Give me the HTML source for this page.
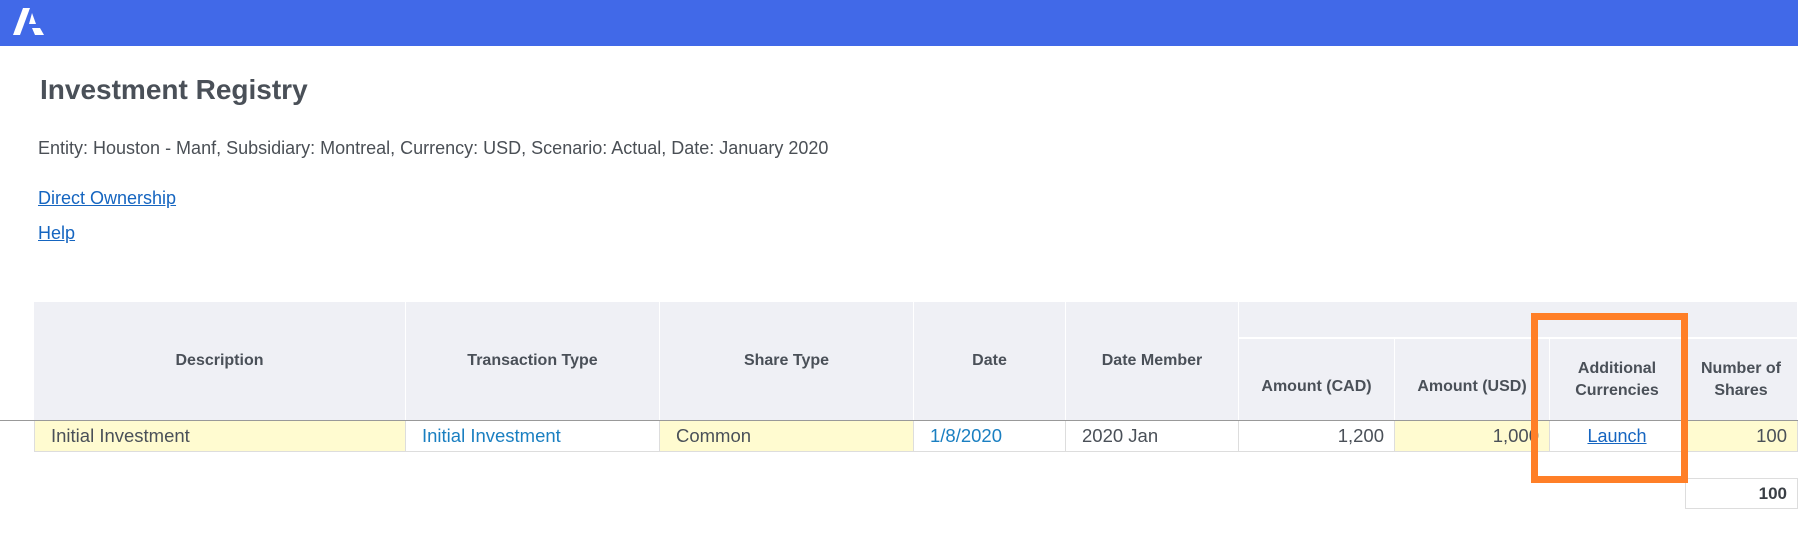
<!DOCTYPE html>
<html><head><meta charset="utf-8"><style>
*{margin:0;padding:0;box-sizing:border-box}
body{width:1798px;height:554px;background:#fff;font-family:"Liberation Sans",sans-serif;position:relative;overflow:hidden;color:#4a5058}
.a{position:absolute}
.hdr{left:0;top:0;width:1798px;height:46px;background:#4169e8}
.title{left:40px;top:74px;font-size:28px;font-weight:bold;color:#4a5058}
.sub{left:38px;top:138px;font-size:18px;color:#4a4f55}
.lnk{font-size:18px;color:#1565c0;text-decoration:underline}
.hc{background:#eff0f5;border-right:1px solid #fff;display:flex;align-items:center;justify-content:center;text-align:center;font-weight:bold;font-size:16px;color:#4a5058;line-height:22px}
.c{top:421px;height:31px;border-right:1px solid #ddd;border-bottom:1px solid #ddd;font-size:18.5px;display:flex;align-items:center;padding:0 16px;color:#4a5058}
.y{background:#fffbd0}
.bl{color:#1a7fc1}
.r{justify-content:flex-end;padding-right:10px}
</style></head><body>
<div class="a hdr"></div>
<svg class="a" style="left:0;top:0" width="60" height="46"><polygon points="13,35 20,35 30,8 23,8" fill="#fff"/><polygon points="32,13 36,24 29,24" fill="#fff"/><polygon points="32,28 40,28 44,35 35,35" fill="#fff"/></svg>
<div class="a title">Investment Registry</div>
<div class="a sub">Entity: Houston - Manf, Subsidiary: Montreal, Currency: USD, Scenario: Actual, Date: January 2020</div>
<a class="a lnk" style="left:38px;top:188px">Direct Ownership</a>
<a class="a lnk" style="left:38px;top:223px">Help</a>

<div class="a hc" style="left:34px;top:302px;width:372px;height:118px">Description</div>
<div class="a hc" style="left:406px;top:302px;width:254px;height:118px">Transaction Type</div>
<div class="a hc" style="left:660px;top:302px;width:254px;height:118px">Share Type</div>
<div class="a hc" style="left:914px;top:302px;width:152px;height:118px">Date</div>
<div class="a hc" style="left:1066px;top:302px;width:173px;height:118px">Date Member</div>
<div class="a hc" style="left:1239px;top:302px;width:559px;height:36px;border-bottom:1px solid #fff"></div>
<div class="a hc" style="left:1239px;top:339px;width:156px;height:81px;padding-top:14px">Amount (CAD)</div>
<div class="a hc" style="left:1395px;top:339px;width:155px;height:81px;padding-top:14px">Amount (USD)</div>
<div class="a hc" style="left:1550px;top:339px;width:135px;height:81px">Additional<br>Currencies</div>
<div class="a hc" style="left:1685px;top:339px;width:113px;height:81px">Number of<br>Shares</div>
<div class="a" style="left:0;top:420px;width:1798px;height:1px;background:#999"></div>

<div class="a c y" style="left:34px;width:372px;border-left:1px solid #ddd">Initial Investment</div>
<div class="a c bl" style="left:406px;width:254px">Initial Investment</div>
<div class="a c y" style="left:660px;width:254px">Common</div>
<div class="a c bl" style="left:914px;width:152px">1/8/2020</div>
<div class="a c" style="left:1066px;width:173px">2020 Jan</div>
<div class="a c r" style="left:1239px;width:156px">1,200</div>
<div class="a c y r" style="left:1395px;width:155px">1,000</div>
<div class="a c" style="left:1550px;width:135px;justify-content:center"><a class="lnk">Launch</a></div>
<div class="a c y r" style="left:1685px;width:113px">100</div>

<div class="a" style="left:1685px;top:478px;width:113px;height:31px;border:1px solid #ddd;font-weight:bold;font-size:17px;display:flex;align-items:center;justify-content:flex-end;padding-right:10px;color:#3a3f45">100</div>

<div class="a" style="left:1531px;top:313px;width:157px;height:170px;border:7px solid #ff7f27"></div>
</body></html>
